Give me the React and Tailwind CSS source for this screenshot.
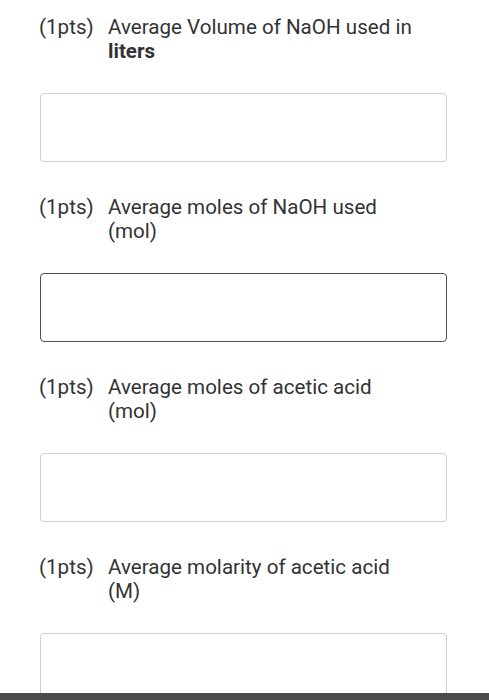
import React from 'react';

const questions = [
  { line1: 'Average Volume of NaOH used in', line2: <span className="font-bold">liters</span>, focused: false },
  { line1: 'Average moles of NaOH used', line2: '(mol)', focused: true },
  { line1: 'Average moles of acetic acid', line2: '(mol)', focused: false },
  { line1: 'Average molarity of acetic acid', line2: '(M)', focused: false },
];

const App = () => {
  return (
    <div
      className="min-h-screen bg-white text-[#333333] pt-[15px] overflow-hidden"
      style={{ fontFamily: 'Roboto, "Noto Sans", sans-serif' }}
    >
      {questions.map((q, index) => (
        <div key={index} className="mb-[33px]">
          <div className="flex pl-[39px] text-[20.6px] leading-[24px]">
            <span className="w-[69px] shrink-0">(1pts)</span>
            <div className="flex flex-col">
              <span className="whitespace-nowrap">{q.line1}</span>
              <span>{q.line2}</span>
            </div>
          </div>
          <div
            className={
              'ml-[40px] mt-[30px] w-[407px] h-[69px] rounded-[4px] bg-white border ' +
              (q.focused ? 'border-[#505050]' : 'border-[#cfcfcf]')
            }
          ></div>
        </div>
      ))}

      {/* bottom bar */}
      <div className="fixed left-0 right-0 bottom-0 h-[7px] bg-[#4b4b4b]"></div>
    </div>
  );
};

export default App;
